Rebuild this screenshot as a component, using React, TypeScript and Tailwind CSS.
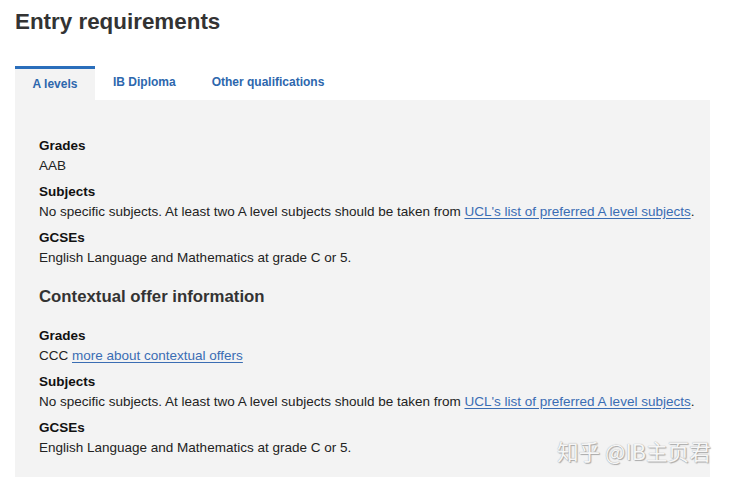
import React from "react";

const Link = ({ children }: { children: React.ReactNode }) => (
  <a href="#" className="text-[#3a6db3] underline underline-offset-[2px]">
    {children}
  </a>
);

const Item = ({ label, children }: { label: string; children: React.ReactNode }) => (
  <div className="mt-[6px] first:mt-0">
    <div className="text-[13.5px] leading-[20px] font-bold text-[#111]">{label}</div>
    <div className="text-[13.5px] leading-[20px] text-[#222] whitespace-nowrap">{children}</div>
  </div>
);

export default function App() {
  return (
    <div
      className="relative w-[732px] h-[484px] bg-white overflow-hidden"
      style={{ fontFamily: '"Liberation Sans", Arial, sans-serif' }}
    >
      <h2 className="pl-[15px] pt-[8px] text-[22.4px] leading-[28px] font-bold text-[#333]">
        Entry requirements
      </h2>
      <div className="flex ml-[15px] mt-[30px] h-[34px]">
        <div className="w-[80px] flex justify-center border-t-[3px] border-[#2a6ebb] bg-[#f3f3f3] pt-[5px] text-[12px] leading-[20px] font-bold text-[#2d67ad]">
          A levels
        </div>
        <div className="px-[18px] pt-[6px] text-[12px] leading-[20px] font-bold text-[#2d67ad]">
          IB Diploma
        </div>
        <div className="px-[18px] pt-[6px] text-[12px] leading-[20px] font-bold text-[#2d67ad]">
          Other qualifications
        </div>
      </div>
      <div className="ml-[15px] w-[695px] bg-[#f3f3f3] pl-[24px] pt-[36px] pb-[19px]">
        <div className="flex flex-col">
          <Item label="Grades">AAB</Item>
          <Item label="Subjects">
            No specific subjects. At least two A level subjects should be taken from{" "}
            <Link>UCL's list of preferred A level subjects</Link>.
          </Item>
          <Item label="GCSEs">English Language and Mathematics at grade C or 5.</Item>
        </div>
        <h3 className="mt-[17px] text-[16.8px] leading-[24px] font-bold text-[#333]">
          Contextual offer information
        </h3>
        <div className="flex flex-col mt-[17px]">
          <Item label="Grades">
            CCC <Link>more about contextual offers</Link>
          </Item>
          <Item label="Subjects">
            No specific subjects. At least two A level subjects should be taken from{" "}
            <Link>UCL's list of preferred A level subjects</Link>.
          </Item>
          <Item label="GCSEs">English Language and Mathematics at grade C or 5.</Item>
        </div>
      </div>
      <div
        className="absolute left-[557px] top-[437px] text-[21.6px] leading-[28px] text-[#f6f6f6]"
        style={{
          fontFamily: '"Noto Sans CJK SC", sans-serif',
          textShadow: "0 0 1px #999, 1px 1px 1px #aaa",
        }}
      >
        知乎 @IB主页君
      </div>
    </div>
  );
}
